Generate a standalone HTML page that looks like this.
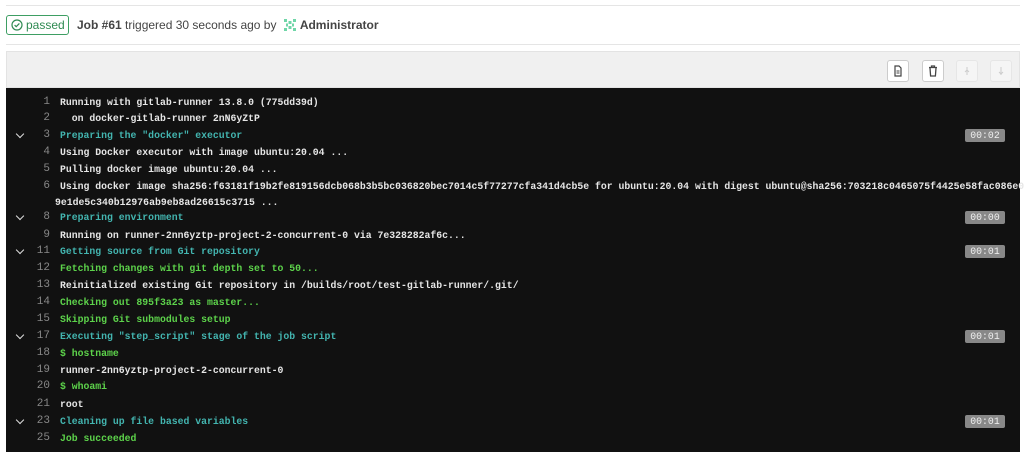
<!DOCTYPE html>
<html><head><style>
body{margin:0;width:1024px;height:456px;background:#fff;font-family:"Liberation Sans",sans-serif;position:relative;overflow:hidden}
.hl{position:absolute;left:6px;right:4px;height:1px;background:#e5e5e5}
.badge{position:absolute;left:6px;top:15px;width:63px;height:20px;border:1px solid #3e9e63;border-radius:3px;box-sizing:border-box;color:#2f8a52;font-size:12px;line-height:18px}
.hdr{position:absolute;left:77px;top:18px;font-size:12px;color:#444}
.tb{position:absolute;left:6px;top:51px;width:1014px;height:37px;background:#f0f0f0;border:1px solid #e3e3e3;box-sizing:border-box}
.btn{position:absolute;top:8px;width:22px;height:22px;border:1px solid #ccc;border-radius:3px;background:#fff;box-sizing:border-box}
.btn.d{background:#f5f5f5;border-color:#e6e6e6}
.log{position:absolute;left:6px;top:88px;width:1014px;height:364px;background:#111;font-family:"Liberation Mono",monospace;font-size:9.8px;font-weight:bold;color:#e6e6e6}
.r{position:absolute;left:0;height:17px;line-height:17px;white-space:pre;width:1014px}
.n{position:absolute;left:0;width:44px;text-align:right;color:#888;font-weight:normal;font-size:11px}
.t{position:absolute;left:54px}
.c{color:#43b5b0}.g{color:#5dd34b}
.chev{position:absolute;left:11px;top:4px;width:5px;height:5px;border-right:1.8px solid #ddd;border-bottom:1.8px solid #ddd;transform:rotate(45deg)}
.tm{position:absolute;left:959px;top:2px;width:40px;height:13px;line-height:13px;background:#888;color:#f0f0f0;border-radius:2px;text-align:center;font-weight:normal}
</style></head><body>
<div class="hl" style="top:5px"></div>
<div class="badge"><svg width="12" height="12" style="position:absolute;left:4px;top:3px" viewBox="0 0 12 12"><circle cx="6" cy="6" r="5" fill="none" stroke="#2f8a52" stroke-width="1.2"/><path d="M3.6 6.1l1.6 1.6 3.2-3.3" fill="none" stroke="#2f8a52" stroke-width="1.2"/></svg><span style="position:absolute;left:19px">passed</span></div>
<div class="hdr"><b>Job #61</b> triggered 30 seconds ago by <svg width="14" height="14" viewBox="0 0 14 14" style="vertical-align:-3px;margin:0 3px"><g fill="#6fd6a8"><rect x="1" y="1" width="3" height="3"/><rect x="10" y="1" width="3" height="3"/><rect x="5.5" y="3" width="3" height="3"/><rect x="1" y="10" width="3" height="3"/><rect x="10" y="10" width="3" height="3"/><rect x="5.5" y="8" width="3" height="3"/><rect x="3" y="5.5" width="2" height="3"/><rect x="9" y="5.5" width="2" height="3"/></g></svg><b>Administrator</b></div>
<div class="hl" style="top:44px"></div>
<div class="tb">
<div class="btn" style="left:880px"><svg width="20" height="20" viewBox="0 0 20 20"><path d="M7 5h4l2 2v8H7z" fill="none" stroke="#444" stroke-width="1.2"/><path d="M8.5 10h3M8.5 12h3" stroke="#444"/></svg></div>
<div class="btn" style="left:915px"><svg width="20" height="20" viewBox="0 0 20 20"><path d="M6 6.5h8M8.5 6V5h3v1M7 7l.6 8h4.8l.6-8" fill="none" stroke="#444" stroke-width="1.3"/></svg></div>
<div class="btn d" style="left:949px"><svg width="20" height="20" viewBox="0 0 20 20"><path d="M10 6v8M8 11l2-2 2 2" fill="none" stroke="#ccc"/></svg></div>
<div class="btn d" style="left:983px"><svg width="20" height="20" viewBox="0 0 20 20"><path d="M10 6v8M8 11l2 2 2-2" fill="none" stroke="#ccc"/></svg></div>
</div>
<div class="log">
<div class="r" style="top:6px"><span class="n">1</span><span class="t">Running with gitlab-runner 13.8.0 (775dd39d)</span></div>
<div class="r" style="top:22px"><span class="n">2</span><span class="t">  on docker-gitlab-runner 2nN6yZtP</span></div>
<div class="r" style="top:39px"><span class="chev"></span><span class="n">3</span><span class="t c">Preparing the "docker" executor</span><span class="tm">00:02</span></div>
<div class="r" style="top:56px"><span class="n">4</span><span class="t">Using Docker executor with image ubuntu:20.04 ...</span></div>
<div class="r" style="top:73px"><span class="n">5</span><span class="t">Pulling docker image ubuntu:20.04 ...</span></div>
<div class="r" style="top:90px"><span class="n">6</span><span class="t">Using docker image sha256:f63181f19b2fe819156dcb068b3b5bc036820bec7014c5f77277cfa341d4cb5e for ubuntu:20.04 with digest ubuntu@sha256:703218c0465075f4425e58fac086e0</span></div>
<div class="r" style="top:106px"><span class="t" style="left:49px">9e1de5c340b12976ab9eb8ad26615c3715 ...</span></div>
<div class="r" style="top:121px"><span class="chev"></span><span class="n">8</span><span class="t c">Preparing environment</span><span class="tm">00:00</span></div>
<div class="r" style="top:139px"><span class="n">9</span><span class="t">Running on runner-2nn6yztp-project-2-concurrent-0 via 7e328282af6c...</span></div>
<div class="r" style="top:155px"><span class="chev"></span><span class="n">11</span><span class="t c">Getting source from Git repository</span><span class="tm">00:01</span></div>
<div class="r" style="top:172px"><span class="n">12</span><span class="t g">Fetching changes with git depth set to 50...</span></div>
<div class="r" style="top:189px"><span class="n">13</span><span class="t">Reinitialized existing Git repository in /builds/root/test-gitlab-runner/.git/</span></div>
<div class="r" style="top:206px"><span class="n">14</span><span class="t g">Checking out 895f3a23 as master...</span></div>
<div class="r" style="top:223px"><span class="n">15</span><span class="t g">Skipping Git submodules setup</span></div>
<div class="r" style="top:240px"><span class="chev"></span><span class="n">17</span><span class="t c">Executing "step_script" stage of the job script</span><span class="tm">00:01</span></div>
<div class="r" style="top:257px"><span class="n">18</span><span class="t g">$ hostname</span></div>
<div class="r" style="top:274px"><span class="n">19</span><span class="t">runner-2nn6yztp-project-2-concurrent-0</span></div>
<div class="r" style="top:290px"><span class="n">20</span><span class="t g">$ whoami</span></div>
<div class="r" style="top:308px"><span class="n">21</span><span class="t">root</span></div>
<div class="r" style="top:325px"><span class="chev"></span><span class="n">23</span><span class="t c">Cleaning up file based variables</span><span class="tm">00:01</span></div>
<div class="r" style="top:342px"><span class="n">25</span><span class="t g">Job succeeded</span></div>
</div>
</body></html>
